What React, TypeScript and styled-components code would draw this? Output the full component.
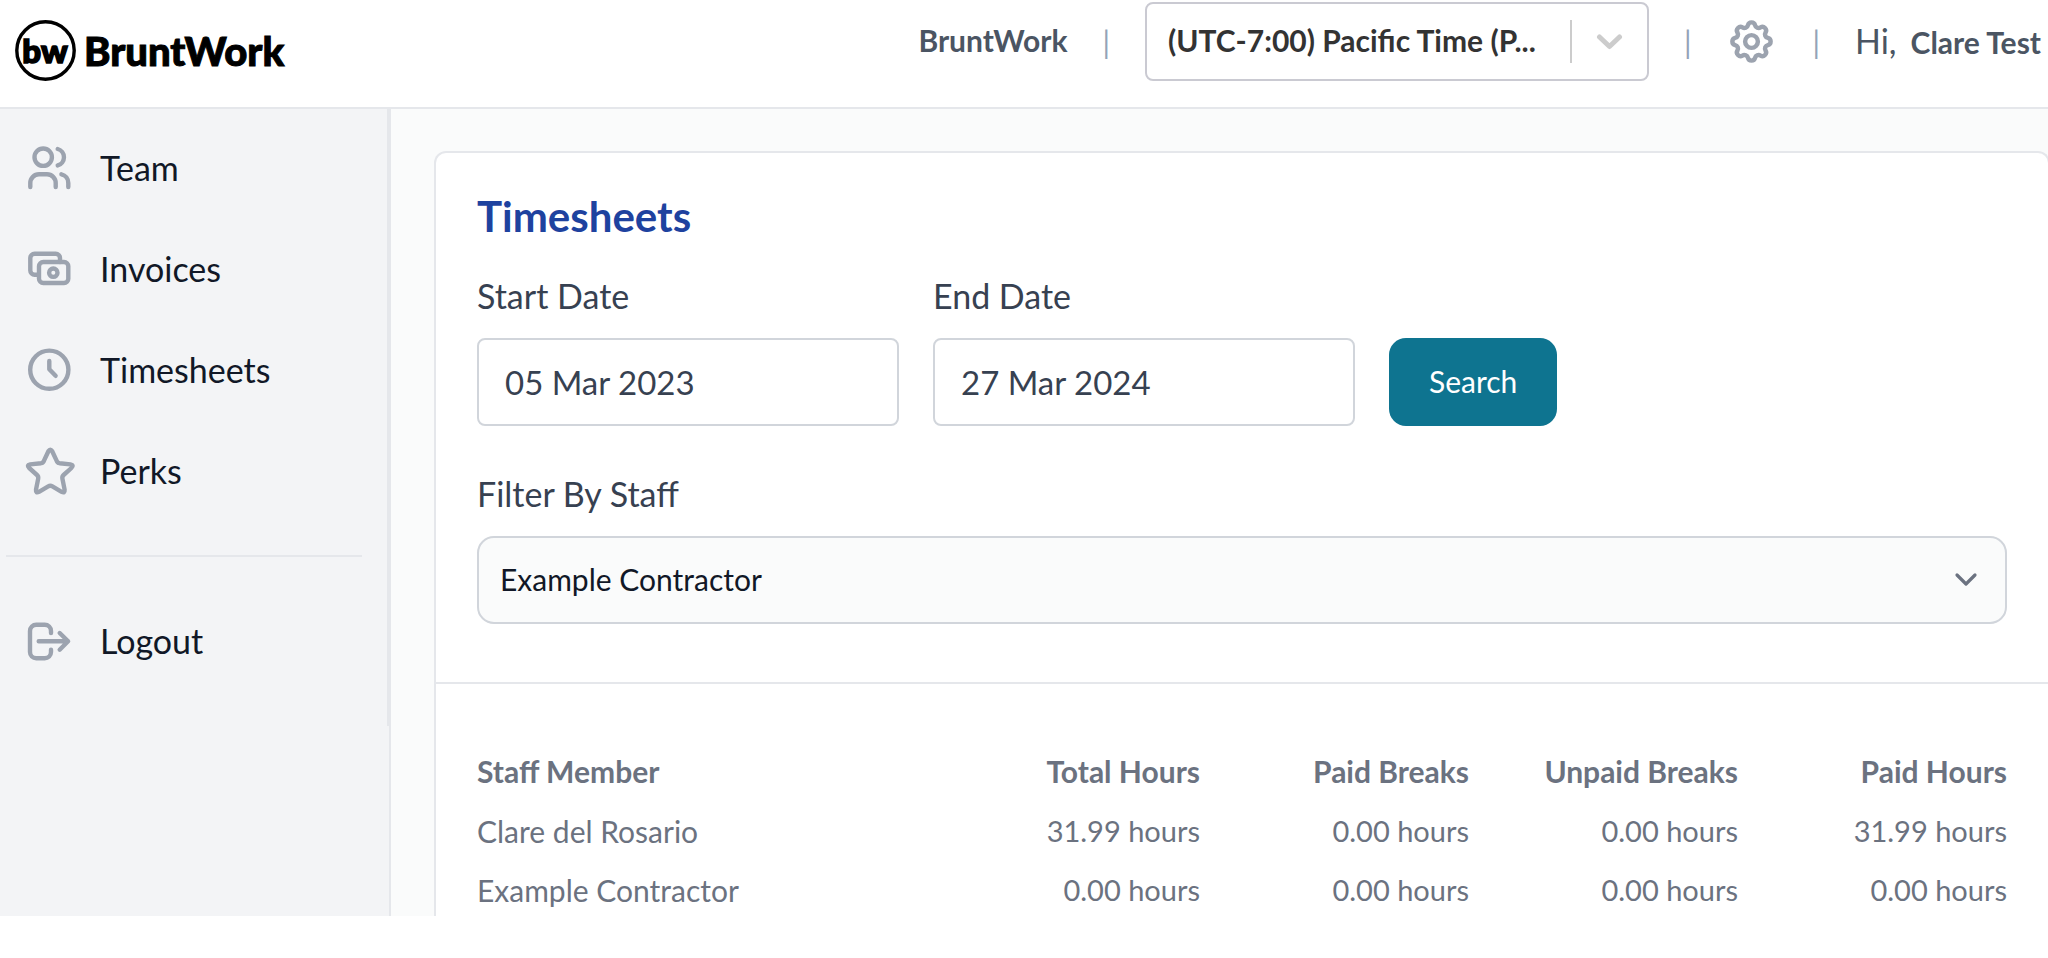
import React from "react";
import styled, { createGlobalStyle } from "styled-components";

const GlobalStyle = createGlobalStyle`
  *, *::before, *::after { box-sizing: border-box; }
  body {
    margin: 0;
    background: #ffffff;
    color: #374151;
    font-family: Lato, "Liberation Sans", sans-serif;
    font-size: 30px;
    line-height: 40px;
  }
  button, input, select {
    margin: 0;
    color: inherit;
    font: inherit;
  }
  a { color: inherit; text-decoration: none; }
`;

const Page = styled.div`
  overflow: hidden;
`;

const Header = styled.header`
  display: flex;
  justify-content: space-between;
  align-items: flex-start;
  padding: 2px 7px 26px 15px;
  border-bottom: 2px solid #e5e7eb;
`;

const Brand = styled.a`
  display: flex;
  align-items: center;
  gap: 8px;
  margin-top: 18px;
  color: #000000;
`;

const BrandMark = styled.svg`
  display: block;
  width: 61px;
  height: 61px;
`;

const BrandName = styled.span`
  font-size: 40px;
  line-height: 60px;
  font-weight: 900;
  -webkit-text-stroke: 1px #000000;
`;

const HeaderTools = styled.div`
  display: flex;
  align-items: center;
  gap: 35px;
  color: #4b5563;
`;

const Company = styled.span`
  padding-bottom: 4px;
  font-weight: 700;
`;

const Divider = styled.span`
  color: #94a3b8;
`;

const Zone = styled.div`
  position: relative;
`;

const ZoneSelect = styled.select`
  display: block;
  appearance: none;
  width: 504px;
  height: 79px;
  padding: 0 84px 4px 21px;
  border: 2px solid #cacad2;
  border-radius: 8px;
  background: #ffffff;
  color: #333333;
  font-weight: 700;
`;

const ZoneArrow = styled.span`
  position: absolute;
  top: 18px;
  right: 26px;
  display: flex;
  align-items: center;
  height: 43px;
  padding-left: 24px;
  border-left: 2px solid #cccccc;
  pointer-events: none;
`;

const GearButton = styled.button`
  display: block;
  padding: 0;
  border: 0;
  background: none;
  color: #9ca3af;

  svg { display: block; }
`;

const Greeting = styled.div`
  display: flex;
  align-items: baseline;
  gap: 14px;
  font-size: 34px;

  strong { font-size: 30px; font-weight: 700; }
`;

const Body = styled.div`
  display: flex;
`;

const Sidebar = styled.aside`
  flex: none;
  width: 391px;
  border-right: 2px solid #e5e7eb;
  background: #f3f4f6;
`;

const SidebarNav = styled.nav`
  padding: 17px 25px 43px 6px;
  border-right: 2px solid #e5e7eb;
`;

const NavGroup = styled.ul<{ $divided?: boolean }>`
  display: flex;
  flex-direction: column;
  gap: 17px;
  margin: ${(p) => (p.$divided ? "42px 0 0" : "0")};
  padding: ${(p) => (p.$divided ? "42px 0 0" : "0")};
  border-top: ${(p) => (p.$divided ? "2px solid #e5e7eb" : "0")};
  list-style: none;
`;

const NavLink = styled.a`
  display: flex;
  align-items: center;
  gap: 26px;
  height: 84px;
  padding-left: 20px;
  color: #111827;
  font-size: 34px;
`;

const NavIcon = styled.svg`
  flex: none;
  width: 48px;
  height: 48px;
  overflow: visible;
  fill: none;
  stroke: #9ca3af;
  stroke-width: 4.4;
  stroke-linecap: round;
  stroke-linejoin: round;
`;

const Main = styled.main`
  flex: 1;
  min-width: 0;
  padding: 42px 0 0 43px;
  background: #fafbfb;
`;

const Card = styled.section`
  margin-right: -2px;
  border: 2px solid #e5e7eb;
  border-bottom: 0;
  border-radius: 12px 12px 0 0;
  background: #ffffff;
`;

const Filters = styled.form`
  padding: 37px 41px 58px;
  border-bottom: 2px solid #e5e7eb;
`;

const Title = styled.h1`
  margin: 0 0 34px;
  color: #1e429f;
  font-size: 42px;
  line-height: 52px;
  font-weight: 700;
`;

const DateRow = styled.div`
  display: flex;
  align-items: flex-end;
  gap: 34px;
  margin-bottom: 48px;
`;

const Field = styled.div`
  display: flex;
  flex-direction: column;
  gap: 22px;
`;

const Label = styled.label`
  font-size: 34px;
`;

const DateInput = styled.input`
  width: 422px;
  height: 88px;
  padding: 0 26px;
  border: 2px solid #d1d5db;
  border-radius: 8px;
  background: #ffffff;
  font-size: 33px;
`;

const SearchButton = styled.button`
  height: 88px;
  padding: 0 40px 2px;
  border: 0;
  border-radius: 17px;
  background: #0e7490;
  color: #ffffff;
`;

const SelectWrap = styled.div`
  position: relative;
`;

const StaffSelect = styled.select`
  display: block;
  appearance: none;
  width: 100%;
  height: 88px;
  padding: 0 90px 2px 21px;
  border: 2px solid #d1d5db;
  border-radius: 17px;
  background: #fafbfb;
  color: #111827;
`;

const SelectChevron = styled.svg`
  position: absolute;
  top: 36px;
  right: 29px;
  pointer-events: none;
`;

const Hours = styled.table`
  width: calc(100% - 82px);
  margin: 57px 41px 0;
  border-collapse: collapse;
  table-layout: fixed;
  color: #6b7280;

  th, td {
    padding: 10px 0;
    text-align: right;
    font-weight: 400;
  }
  td { font-size: 29px; }
  thead th { font-weight: 700; }
  th:first-child { text-align: left; }
  th:not(:first-child) { width: 269px; }
  tbody tr:last-child > * { padding: 9px 0 6px; }
`;

const navItems = [
  {
    label: "Team",
    icon: (
      <>
        <circle cx="17.2" cy="13.2" r="8.7" />
        <path d="M31.7 5a8.5 8.5 0 0 1 0 16.4M4.3 43v-4a8.7 8.7 0 0 1 8.7-8.7h8a8.7 8.7 0 0 1 8.7 8.7v4M35.4 30.3a8.8 8.8 0 0 1 6.9 8.7v4" />
      </>
    ),
  },
  {
    label: "Invoices",
    icon: (
      <>
        <path d="M11 29.7H8.6A4.3 4.3 0 0 1 4.3 25.4V13a4.3 4.3 0 0 1 4.3-4.3h21.1A4.3 4.3 0 0 1 34 13v4" />
        <rect x="13" y="17" width="29.3" height="21" rx="4.3" />
        <circle cx="27.3" cy="27.7" r="4.2" />
      </>
    ),
  },
  {
    label: "Timesheets",
    icon: (
      <>
        <circle cx="23.3" cy="23.7" r="19.1" />
        <path d="M23.3 15v8.3l6.3 6.5" />
      </>
    ),
  },
  {
    label: "Perks",
    icon: (
      <path d="M22.4 4.2Q24.3 1 26.2 4.2L30.6 13.6Q31.2 15.8 33.6 16.2L44.4 17.4Q48.4 18.2 45.4 21L37.6 28Q36 29.4 36.4 31.6L38.6 42.6Q39 46.6 35.6 44.8L26.4 39.4Q24.3 38.2 22.2 39.4L13 44.8Q9.6 46.6 10 42.6L12.2 31.6Q12.6 29.4 11 28L3.2 21Q.2 18.2 4.2 17.4L15 16.2Q17.4 15.8 18 13.6Z" />
    ),
  },
];

const rows = [
  ["Clare del Rosario", "31.99 hours", "0.00 hours", "0.00 hours", "31.99 hours"],
  ["Example Contractor", "0.00 hours", "0.00 hours", "0.00 hours", "0.00 hours"],
];

const columns = ["Staff Member", "Total Hours", "Paid Breaks", "Unpaid Breaks", "Paid Hours"];

export default function App() {
  return (
    <>
      <GlobalStyle />
      <Page>
        <Header>
          <Brand href="#">
            <BrandMark viewBox="0 0 61 61" aria-hidden="true">
              <circle cx="30.5" cy="30.5" r="28.7" fill="none" stroke="#000" strokeWidth="3.4" />
              <text x="30" y="43" textAnchor="middle" fontFamily="Lato, sans-serif" fontWeight="900" fontSize="33" stroke="#000" strokeWidth="1.6">
                bw
              </text>
            </BrandMark>
            <BrandName>BruntWork</BrandName>
          </Brand>
          <HeaderTools>
            <Company>BruntWork</Company>
            <Divider>|</Divider>
            <Zone>
              <ZoneSelect aria-label="Time zone">
                <option>(UTC-7:00) Pacific Time (P...</option>
              </ZoneSelect>
              <ZoneArrow>
                <svg width="27" height="18" viewBox="0 0 27 18" fill="none" stroke="#cccccc" strokeWidth="5" strokeLinecap="round" strokeLinejoin="round">
                  <path d="M3.5 4l10 9.5 10-9.5" />
                </svg>
              </ZoneArrow>
            </Zone>
            <Divider>|</Divider>
            <GearButton type="button" aria-label="Settings">
              <svg width="51" height="51" viewBox="0 0 24 24" fill="none" stroke="currentColor" strokeWidth="2.1" strokeLinecap="round" strokeLinejoin="round">
                <path d="M10.325 4.317c.426-1.756 2.924-1.756 3.35 0a1.724 1.724 0 002.573 1.066c1.543-.94 3.31.826 2.37 2.37a1.724 1.724 0 001.065 2.572c1.756.426 1.756 2.924 0 3.35a1.724 1.724 0 00-1.066 2.573c.94 1.543-.826 3.31-2.37 2.37a1.724 1.724 0 00-2.572 1.065c-.426 1.756-2.924 1.756-3.35 0a1.724 1.724 0 00-2.573-1.066c-1.543.94-3.31-.826-2.37-2.37a1.724 1.724 0 00-1.065-2.572c-1.756-.426-1.756-2.924 0-3.35a1.724 1.724 0 001.066-2.573c-.94-1.543.826-3.31 2.37-2.37.996.608 2.296.07 2.572-1.065z" />
                <path d="M15 12a3 3 0 11-6 0 3 3 0 016 0z" />
              </svg>
            </GearButton>
            <Divider>|</Divider>
            <Greeting>
              <span>Hi,</span>
              <strong>Clare Test</strong>
            </Greeting>
          </HeaderTools>
        </Header>
        <Body>
          <Sidebar>
            <SidebarNav aria-label="Main">
              <NavGroup>
                {navItems.map((item) => (
                  <li key={item.label}>
                    <NavLink href="#">
                      <NavIcon viewBox="0 0 48 48" aria-hidden="true">{item.icon}</NavIcon>
                      {item.label}
                    </NavLink>
                  </li>
                ))}
              </NavGroup>
              <NavGroup $divided>
                <li>
                  <NavLink href="#">
                    <NavIcon viewBox="0 0 48 48" aria-hidden="true">
                      <path d="M25 16v-2a6.3 6.3 0 0 0-6.3-6.3h-8.4A6.3 6.3 0 0 0 4 14v21a6.3 6.3 0 0 0 6.3 6.3h8.4A6.3 6.3 0 0 0 25 35v-2.3M12.7 24.3H42M33.7 16l8.4 8.3-8.4 8.4" />
                    </NavIcon>
                    Logout
                  </NavLink>
                </li>
              </NavGroup>
            </SidebarNav>
          </Sidebar>
          <Main>
            <Card>
              <Filters onSubmit={(e) => e.preventDefault()}>
                <Title>Timesheets</Title>
                <DateRow>
                  <Field>
                    <Label htmlFor="start">Start Date</Label>
                    <DateInput id="start" type="text" defaultValue="05 Mar 2023" />
                  </Field>
                  <Field>
                    <Label htmlFor="end">End Date</Label>
                    <DateInput id="end" type="text" defaultValue="27 Mar 2024" />
                  </Field>
                  <SearchButton type="submit">Search</SearchButton>
                </DateRow>
                <Field>
                  <Label htmlFor="staff">Filter By Staff</Label>
                  <SelectWrap>
                    <StaffSelect id="staff">
                      <option>Example Contractor</option>
                    </StaffSelect>
                    <SelectChevron width="24" height="15" viewBox="0 0 24 15" fill="none" stroke="#6b7280" strokeWidth="3.2" strokeLinecap="round" strokeLinejoin="round">
                      <path d="M3 3l9 9 9-9" />
                    </SelectChevron>
                  </SelectWrap>
                </Field>
              </Filters>
              <Hours>
                <thead>
                  <tr>
                    {columns.map((c) => (
                      <th key={c} scope="col">{c}</th>
                    ))}
                  </tr>
                </thead>
                <tbody>
                  {rows.map(([name, ...cells]) => (
                    <tr key={name}>
                      <th scope="row">{name}</th>
                      {cells.map((cell, i) => (
                        <td key={i}>{cell}</td>
                      ))}
                    </tr>
                  ))}
                </tbody>
              </Hours>
            </Card>
          </Main>
        </Body>
      </Page>
    </>
  );
}
